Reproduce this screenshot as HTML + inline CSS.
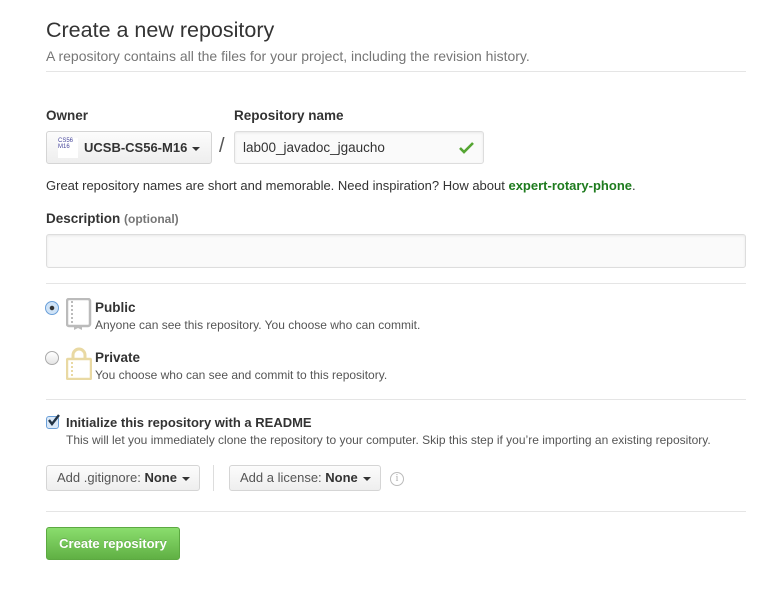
<!DOCTYPE html>
<html><head><style>
*{box-sizing:border-box;margin:0;padding:0}
body{width:778px;height:591px;background:#fff;font-family:"Liberation Sans",sans-serif;color:#333;position:relative;overflow:hidden}
.a{position:absolute;white-space:nowrap}
.hr{position:absolute;left:46px;width:700px;height:1px;background:#e5e5e5}
.btn{position:absolute;border:1px solid #d5d5d5;border-radius:3px;background:linear-gradient(#fcfcfc,#eee);font-size:13.5px;color:#333}
.caret{display:inline-block;width:0;height:0;border-left:4px solid transparent;border-right:4px solid transparent;border-top:4px solid #333;vertical-align:middle;margin-left:5px}
.b{font-weight:bold}
</style></head><body>
<div class="a" style="left:46px;top:18px;font-size:21.5px;color:#333">Create a new repository</div>
<div class="a" style="left:46px;top:48px;font-size:14px;color:#767676">A repository contains all the files for your project, including the revision history.</div>
<div class="hr" style="top:71px"></div>

<div class="a b" style="left:46px;top:108px;font-size:13.5px">Owner</div>
<div class="a b" style="left:234px;top:108px;font-size:13.5px">Repository name</div>
<div class="btn" style="left:46px;top:131px;width:166px;height:33px">
 <div class="a" style="left:11px;top:6px;width:20px;height:20px;background:#fff;font-size:6px;line-height:6px;color:#449">CS56<br>M16</div>
 <div class="a b" style="left:37px;top:8px;font-size:13px">UCSB-CS56-M16<span class="caret"></span></div>
</div>
<div class="a" style="left:219px;top:135px;font-size:20px;color:#555">/</div>
<div class="a" style="left:234px;top:131px;width:250px;height:33px;border:1px solid #ddd;border-radius:3px;background:#fafafa;box-shadow:inset 0 1px 2px rgba(0,0,0,.075)">
 <div class="a" style="left:8px;top:8px;font-size:13.5px">lab00_javadoc_jgaucho</div>
 <svg class="a" style="left:224px;top:9px" width="16" height="14" viewBox="0 0 16 14"><path d="M1 7l4 4 9-9" stroke="#55a532" stroke-width="2.6" fill="none"/></svg>
</div>
<div class="a" style="left:46px;top:178px;font-size:13px">Great repository names are short and memorable. Need inspiration? How about <span class="b" style="color:#1e7b1e">expert-rotary-phone</span>.</div>

<div class="a b" style="left:46px;top:211px;font-size:13.5px">Description <span style="color:#767676;font-size:12px">(optional)</span></div>
<div class="a" style="left:46px;top:234px;width:700px;height:34px;border:1px solid #ddd;border-radius:3px;background:#fafafa;box-shadow:inset 0 1px 2px rgba(0,0,0,.075)"></div>
<div class="hr" style="top:283px"></div>

<div class="a" style="left:45px;top:301px;width:14px;height:14px;border-radius:50%;border:1px solid #6a9fd8;background:radial-gradient(#333 0 2px,#cfe3f7 2.5px)"></div>
<svg class="a" style="left:66px;top:298px" width="26" height="33" viewBox="0 0 26 33"><rect x="1" y="1" width="23" height="27" rx="2" fill="none" stroke="#bbb" stroke-width="2.5"/><path d="M6 3v23" stroke="#bbb" stroke-width="2" stroke-dasharray="2 2"/><path d="M8 27h8v5l-4-2-4 2z" fill="#bbb"/></svg>
<div class="a b" style="left:95px;top:300px;font-size:13.5px">Public</div>
<div class="a" style="left:95px;top:318px;font-size:12px;color:#555">Anyone can see this repository. You choose who can commit.</div>

<div class="a" style="left:45px;top:351px;width:14px;height:14px;border-radius:50%;border:1px solid #aaa;background:linear-gradient(#fff,#e5e5e5)"></div>
<svg class="a" style="left:66px;top:346px" width="26" height="34" viewBox="0 0 26 34"><path d="M7 13V9a6 6 0 0112 0v4" fill="none" stroke="#e9d9a3" stroke-width="3"/><rect x="1" y="13" width="24" height="20" rx="1" fill="none" stroke="#e9d9a3" stroke-width="2.5"/><path d="M6 16v15" stroke="#e9d9a3" stroke-width="2" stroke-dasharray="2 2"/></svg>
<div class="a b" style="left:95px;top:350px;font-size:13.5px">Private</div>
<div class="a" style="left:95px;top:368px;font-size:12px;color:#555">You choose who can see and commit to this repository.</div>
<div class="hr" style="top:399px"></div>

<div class="a" style="left:46px;top:416px;width:13px;height:13px;border-radius:3px;border:1px solid #6a9fd8;background:#dbe9f8"></div>
<svg class="a" style="left:47px;top:413px" width="14" height="14" viewBox="0 0 14 14"><path d="M2 7l3 4 7-9" stroke="#234" stroke-width="2.4" fill="none"/></svg>
<div class="a b" style="left:66px;top:415px;font-size:13px">Initialize this repository with a README</div>
<div class="a" style="left:66px;top:433px;font-size:12px;color:#555">This will let you immediately clone the repository to your computer. Skip this step if you’re importing an existing repository.</div>

<div class="btn" style="left:46px;top:465px;width:154px;height:26px"><div class="a" style="left:10px;top:4px;color:#555;font-size:13px">Add .gitignore: <b style="color:#333">None</b><span class="caret"></span></div></div>
<div class="a" style="left:213px;top:465px;width:1px;height:26px;background:#ddd"></div>
<div class="btn" style="left:229px;top:465px;width:152px;height:26px"><div class="a" style="left:10px;top:4px;color:#555;font-size:13px">Add a license: <b style="color:#333">None</b><span class="caret"></span></div></div>
<div class="a" style="left:390px;top:472px;width:14px;height:14px;border:1px solid #bbb;border-radius:50%;font-size:10px;color:#aaa;text-align:center;line-height:12px;font-family:'Liberation Serif',serif">i</div>
<div class="hr" style="top:511px"></div>

<div class="a b" style="left:46px;top:527px;width:134px;height:33px;border:1px solid #5ca941;border-radius:3px;background:linear-gradient(#8add6d,#60b044);color:#fff;font-size:13px;text-align:center;line-height:31px;text-shadow:0 -1px 0 rgba(0,0,0,.15)">Create repository</div>
</body></html>
